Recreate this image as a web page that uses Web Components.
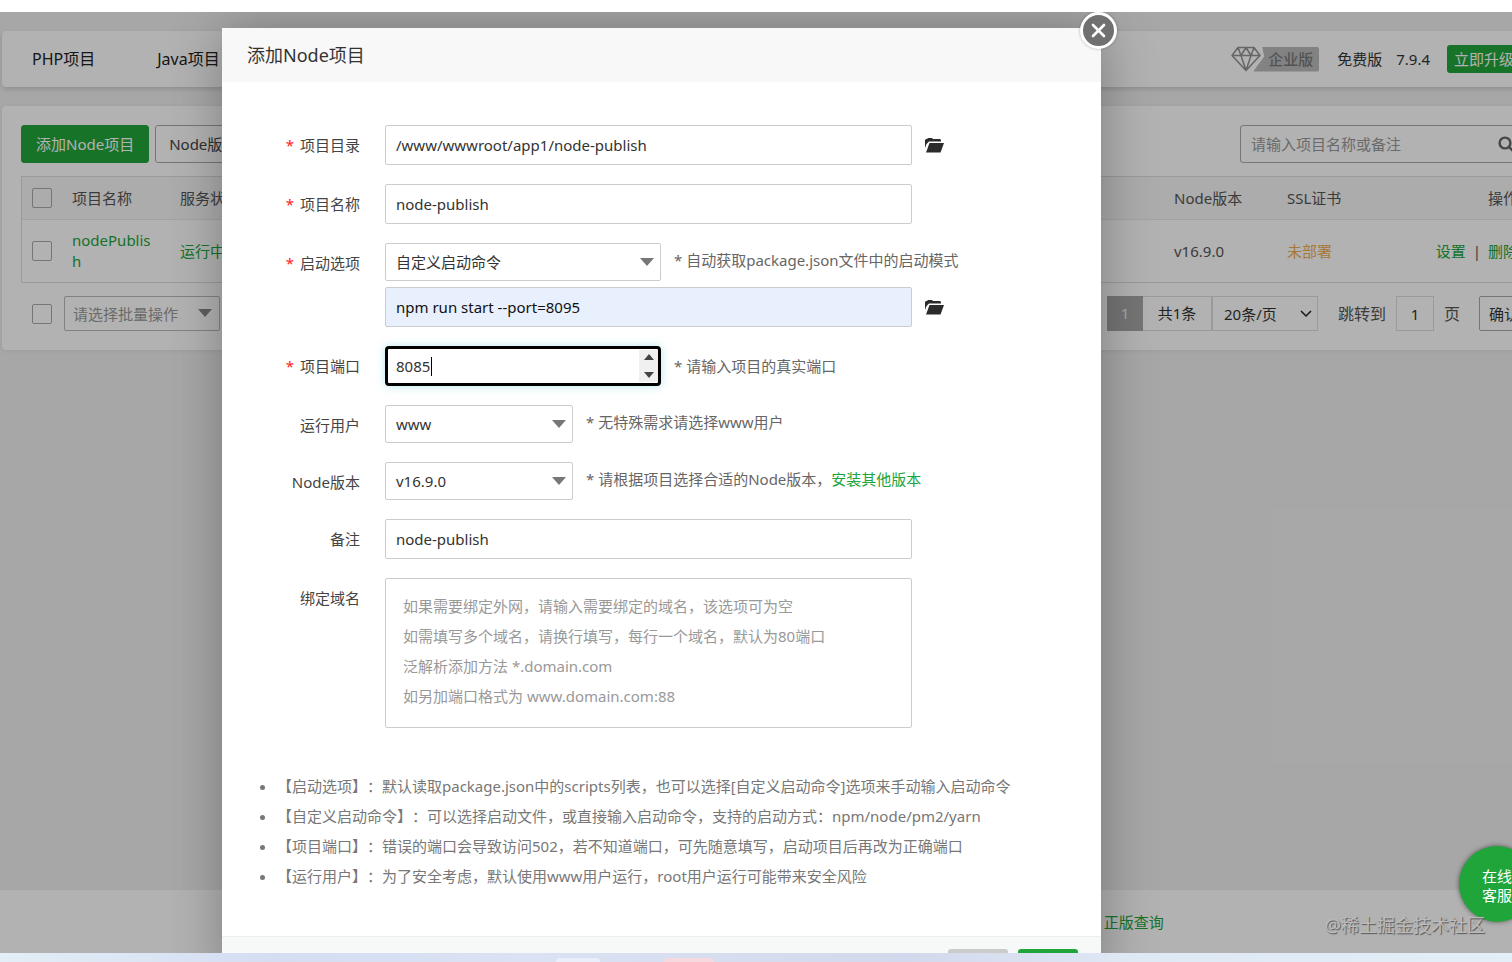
<!DOCTYPE html>
<html lang="zh-CN">
<head>
<meta charset="utf-8">
<title>Node项目</title>
<style>
  html, body {
    height: 100%;
    margin: 0;
  }

  body {
    display: flex;
    flex-direction: column;
    overflow: hidden;
    background: #fff;
    color: #333;
    font: 15px/20px "Noto Sans", "Noto Sans CJK SC", sans-serif;
    text-spacing-trim: space-all;
  }
</style>
</head>
<body>
<bt-window>
  <bt-nav></bt-nav>
  <bt-panel>
    <bt-toolbar></bt-toolbar>
    <bt-project-table></bt-project-table>
    <bt-pager></bt-pager>
  </bt-panel>
  <bt-footer slot="footer"></bt-footer>

  <bt-dialog slot="layer" heading="添加Node项目">
    <bt-row label="项目目录" required value="/www/wwwroot/app1/node-publish" folder></bt-row>
    <bt-row label="项目名称" required value="node-publish"></bt-row>
    <bt-row label="启动选项" required type="select" size="medium" value="自定义启动命令" hint="* 自动获取package.json文件中的启动模式"></bt-row>
    <bt-row name="启动命令" class="joined" value="npm run start --port=8095" autofilled folder></bt-row>
    <bt-row label="项目端口" required type="number" size="medium" value="8085" hint="* 请输入项目的真实端口"></bt-row>
    <bt-row label="运行用户" type="select" size="small" value="www" hint="* 无特殊需求请选择www用户"></bt-row>
    <bt-row label="Node版本" type="select" size="small" value="v16.9.0" hint="* 请根据项目选择合适的Node版本，"><a slot="link" href="#">安装其他版本</a></bt-row>
    <bt-row label="备注" value="node-publish"></bt-row>
    <bt-row label="绑定域名" type="textarea" placeholder="如果需要绑定外网，请输入需要绑定的域名，该选项可为空&#10;如需填写多个域名，请换行填写，每行一个域名，默认为80端口&#10;泛解析添加方法 *.domain.com&#10;如另加端口格式为 www.domain.com:88"></bt-row>
    <bt-help slot="help"></bt-help>
  </bt-dialog>
  <bt-service slot="layer"></bt-service>
  <bt-watermark slot="layer">@稀土掘金技术社区</bt-watermark>
</bt-window>
<bt-taskbar></bt-taskbar>

<script>
class BtElement extends HTMLElement {
  constructor() {
    super();
    this.attachShadow({ mode: 'open' });
  }

  connectedCallback() {
    this.shadowRoot.innerHTML = this.render();
  }
}

class BtWindow extends BtElement {
  render() {
    return `
      <style>
        :host {
          display: flex;
          flex-direction: column;
          flex: 1;
          position: relative;
          overflow: hidden;
          margin-top: 12px;
          background: #f0f0f0;
        }

        .page {
          flex: 1;
          display: flex;
          flex-direction: column;
          gap: 19px;
          padding: 19px 0 0 2px;
          margin-right: -36px;
        }

        .shade {
          position: absolute;
          inset: 0;
          background: rgba(0, 0, 0, .3);
        }
      </style>
      <div class="page"><slot></slot></div>
      <slot name="footer"></slot>
      <div class="shade"></div>
      <slot name="layer"></slot>
    `;
  }
}

class BtNav extends BtElement {
  render() {
    return `
      <style>
        :host {
          display: flex;
          align-items: center;
          height: 56px;
          padding: 0 20px 0 30px;
          background: #fff;
          border-radius: 4px;
          box-shadow: 0 2px 5px rgba(0, 0, 0, .15);
        }

        nav {
          display: flex;
          flex: 1;
          gap: 62px;
          font-size: 16px;
        }

        a {
          color: #222;
          text-decoration: none;
        }

        .pro {
          display: flex;
          align-items: center;
        }

        .pro svg {
          z-index: 1;
        }

        .pro span {
          margin-left: -8px;
          padding: 0 6px 0 15px;
          line-height: 25px;
          background: #bbb;
          color: #777;
          font-weight: 500;
          clip-path: polygon(9px 0, 100% 0, 100% 100%, 0 100%, 11px 40%);
          border-radius: 2px;
        }

        .free {
          margin: 0 14px 0 18px;
        }

        button {
          width: 81px;
          height: 28px;
          margin-left: 17px;
          padding: 0 7px;
          border: 0;
          border-radius: 3px;
          background: #20a53a;
          color: #fff;
          font: inherit;
          text-align: left;
          white-space: nowrap;
        }
      </style>
      <nav><a href="#">PHP项目</a><a href="#">Java项目</a></nav>
      <div class="pro">
        <svg width="30" height="26" viewBox="0 0 30 26" fill="none" stroke="#666" stroke-width="1.5" stroke-linejoin="round">
          <path d="M7 1.5h16l6 8-14 15-14-15zM1 9.500h28M7 1.500l3 8 5 15 5-15 3-8M10 9.500l5-8 5 8"/>
        </svg>
        <span>企业版</span>
      </div>
      <span class="free">免费版</span>
      <span>7.9.4</span>
      <button>立即升级</button>
    `;
  }
}

class BtPanel extends BtElement {
  render() {
    return `
      <style>
        :host {
          display: flex;
          flex-direction: column;
          gap: 13px;
          padding: 19px;
          background: #fff;
          border-radius: 4px;
          box-shadow: 0 1px 5px rgba(0, 0, 0, .08);
        }
      </style>
      <slot></slot>
    `;
  }
}

class BtToolbar extends BtElement {
  render() {
    return `
      <style>
        :host {
          display: flex;
          gap: 6px;
        }

        button {
          height: 38px;
          padding: 0 13px;
          border: 1px solid #aaa;
          border-radius: 3px;
          background: #fff;
          color: #444;
          font: inherit;
        }

        .primary {
          padding: 0 14px;
          border-color: #20a53a;
          background: #20a53a;
          color: #fff;
        }

        .search {
          display: flex;
          align-items: center;
          box-sizing: border-box;
          width: 289px;
          height: 38px;
          margin-left: auto;
          padding: 0 13px 0 10px;
          border: 1px solid #aaa;
          border-radius: 3px;
        }

        input {
          flex: 1;
          min-width: 0;
          padding: 0;
          border: 0;
          background: none;
          font: inherit;
        }

        input::placeholder {
          color: #999;
        }
      </style>
      <button class="primary">添加Node项目</button>
      <button>Node版本管理</button>
      <div class="search">
        <input type="search" aria-label="搜索" placeholder="请输入项目名称或备注">
        <svg width="17" height="17" viewBox="0 0 17 17" fill="none" stroke="#666" stroke-width="2.4">
          <circle cx="7" cy="7" r="5.4"/><path d="M11 11l5 5"/>
        </svg>
      </div>
    `;
  }
}

const checkboxStyle = `
  input[type=checkbox] {
    display: block;
    appearance: none;
    box-sizing: border-box;
    width: 20px;
    height: 20px;
    margin: 0;
    border: 1px solid #aaa;
    border-radius: 2px;
  }
`;

class BtProjectTable extends BtElement {
  render() {
    return `
      <style>
        :host {
          display: block;
        }

        table {
          width: 100%;
          table-layout: fixed;
          border-collapse: separate;
          border-spacing: 0;
          border: 1px solid #ddd;
        }

        th, td {
          box-sizing: border-box;
          padding: 0 10px;
          font-weight: normal;
          text-align: left;
          color: #555;
        }

        th {
          height: 43px;
          background: #f6f6f6;
          border-bottom: 1px solid #e8e8e8;
        }

        td {
          height: 62px;
          line-height: 21px;
        }

        th:nth-child(1) { width: 40px; }
        th:nth-child(2) { width: 108px; }
        th:nth-child(4) { width: 113px; }
        th:nth-child(5) { width: 113px; }
        th:nth-child(6) { width: 138px; }
        th:last-child, td:last-child { text-align: right; }

        .name {
          padding-right: 16px;
          word-break: break-all;
        }

        a {
          color: #20a53a;
          text-decoration: none;
        }

        .warn {
          color: #f0ad4e;
        }

        i {
          padding: 0 7px;
          font-style: normal;
        }

        ${checkboxStyle}
      </style>
      <table>
        <thead>
          <tr>
            <th><input type="checkbox" aria-label="全选"></th>
            <th>项目名称</th>
            <th>服务状态</th>
            <th>Node版本</th>
            <th>SSL证书</th>
            <th>操作</th>
          </tr>
        </thead>
        <tbody>
          <tr>
            <td><input type="checkbox" aria-label="nodePublish"></td>
            <td class="name"><a href="#">nodePublish</a></td>
            <td><a href="#">运行中</a></td>
            <td>v16.9.0</td>
            <td><a class="warn" href="#">未部署</a></td>
            <td><a href="#">设置</a><i>|</i><a href="#">删除</a></td>
          </tr>
        </tbody>
      </table>
    `;
  }
}

class BtPager extends BtElement {
  render() {
    return `
      <style>
        :host {
          display: flex;
          align-items: center;
          height: 35px;
          padding-left: 11px;
        }

        .batch {
          position: relative;
          width: 156px;
          margin: 0 auto 0 12px;
        }

        .batch::after {
          content: "";
          position: absolute;
          right: 8px;
          top: 13px;
          border: 7px solid transparent;
          border-top: 8px solid #888;
          border-bottom: 0;
        }

        select, input, button {
          box-sizing: border-box;
          height: 35px;
          border: 1px solid #ddd;
          background: #fff;
          color: #333;
          font: inherit;
        }

        select {
          display: block;
          appearance: none;
        }

        .batch select {
          width: 100%;
          padding: 0 8px;
          border-color: #bbb;
          border-radius: 2px;
          color: #999;
        }

        .current {
          width: 36px;
          line-height: 35px;
          background: #a8a8a8;
          color: #eee;
          text-align: center;
        }

        .total {
          box-sizing: border-box;
          width: 69px;
          line-height: 33px;
          border: 1px solid #ddd;
          border-left: 0;
          text-align: center;
        }

        .size {
          position: relative;
          margin-right: 20px;
        }

        .size select {
          width: 106px;
          padding: 0 11px;
        }

        .size svg {
          position: absolute;
          right: 6px;
          top: 14px;
        }

        .go {
          display: flex;
          align-items: center;
          gap: 10px;
          color: #555;
          font-size: 16px;
        }

        .go input {
          width: 38px;
          padding: 0;
          font-size: 15px;
          text-align: center;
        }

        button {
          width: 50px;
          margin-left: 19px;
          padding: 0 8px;
          border-color: #aaa;
          border-radius: 2px;
        }

        ${checkboxStyle}
      </style>
      <input type="checkbox" aria-label="全选">
      <div class="batch"><select aria-label="批量操作"><option>请选择批量操作</option></select></div>
      <span class="current">1</span>
      <span class="total">共1条</span>
      <div class="size">
        <select aria-label="每页条数"><option>20条/页</option></select>
        <svg width="12" height="8" viewBox="0 0 12 8" fill="none" stroke="#222" stroke-width="1.5"><path d="M1 1l5 5 5-5"/></svg>
      </div>
      <div class="go"><label for="page">跳转到</label><input id="page" value="1"><span>页</span></div>
      <button>确认</button>
    `;
  }
}

class BtFooter extends BtElement {
  render() {
    return `
      <style>
        :host {
          display: flex;
          align-items: center;
          height: 63px;
          padding-left: 73%;
          background: #fff;
        }

        a {
          color: #20a53a;
          text-decoration: none;
        }
      </style>
      <a href="#">正版查询</a>
    `;
  }
}

class BtDialog extends BtElement {
  render() {
    return `
      <style>
        :host {
          position: absolute;
          left: 222px;
          top: 16px;
          width: 879px;
          background: #fff;
          box-shadow: 1px 1px 50px rgba(0, 0, 0, .3);
        }

        h1 {
          margin: 0;
          padding: 0 25px;
          background: #f8f8f8;
          font-size: 18px;
          font-weight: normal;
          line-height: 54px;
        }

        form {
          display: flex;
          flex-direction: column;
          gap: 19px;
          padding-top: 43px;
        }

        ::slotted(.joined) {
          margin-top: -13px;
        }

        footer {
          display: flex;
          justify-content: flex-end;
          gap: 10px;
          height: 50px;
          padding: 12px 23px 0 0;
          background: #f6f9f8;
          border-top: 1px solid #eee;
          box-sizing: border-box;
        }

        footer button {
          width: 60px;
          height: 36px;
          border: 0;
          border-radius: 3px;
          background: #cbcbcb;
          color: #fff;
          font: inherit;
        }

        footer .ok {
          background: #20a53a;
        }

        .close {
          position: absolute;
          right: -16px;
          top: -16px;
          width: 37px;
          height: 37px;
          padding: 0;
          border: 3px solid #fff;
          border-radius: 50%;
          background: #707070;
          box-shadow: 0 0 3px rgba(0, 0, 0, .3);
        }

        .close svg {
          display: block;
          margin: auto;
        }
      </style>
      <h1>${this.getAttribute('heading')}</h1>
      <form><slot></slot></form>
      <slot name="help"></slot>
      <footer>
        <button aria-label="关闭"></button>
        <button class="ok" aria-label="确定"></button>
      </footer>
      <button class="close" aria-label="关闭窗口">
        <svg width="15" height="15" viewBox="0 0 15 15" stroke="#fff" stroke-width="2.6" stroke-linecap="round"><path d="M2 2l11 11M13 2L2 13"/></svg>
      </button>
    `;
  }
}

class BtRow extends BtElement {
  control() {
    const value = this.getAttribute('value') || '';
    const name = this.getAttribute('name');
    const aria = name ? `aria-label="${name}"` : '';

    switch (this.getAttribute('type')) {
      case 'select':
        return `<div class="box select"><select id="control"><option>${value}</option></select></div>`;
      case 'number':
        return `
          <div class="box number">
            <input id="control" type="number" value="${value}">
            <span class="caret"></span>
            <span class="spin">
              <svg width="10" height="6" viewBox="0 0 10 6"><path d="M0 6l5-6 5 6z" fill="#444"/></svg>
              <svg width="10" height="6" viewBox="0 0 10 6"><path d="M0 0h10l-5 6z" fill="#444"/></svg>
            </span>
          </div>`;
      case 'textarea':
        return `<div class="box"><textarea id="control" placeholder="${this.getAttribute('placeholder')}"></textarea></div>`;
      default:
        return `<div class="box"><input id="control" type="text" value="${value}" ${aria}></div>`;
    }
  }

  render() {
    const label = this.getAttribute('label');
    const hint = this.getAttribute('hint');

    return `
      <style>
        :host {
          display: flex;
          align-items: flex-start;
        }

        /* selects are 38px high, the label must not stretch their row */
        label, .blank {
          width: 138px;
          margin: 0 25px -2px 0;
          line-height: 40px;
          text-align: right;
          color: #444;
        }

        em {
          margin-right: 6px;
          color: #f22;
          font-style: normal;
        }

        .box {
          position: relative;
          width: 527px;
        }

        :host([size=medium]) .box { width: 276px; }
        :host([size=small]) .box { width: 188px; }

        input, select, textarea {
          display: block;
          box-sizing: border-box;
          width: 100%;
          height: 40px;
          margin: 0;
          padding: 0 10px;
          border: 1px solid #ccc;
          border-radius: 2px;
          background: #fff;
          color: #333;
          font: inherit;
          outline: 0;
        }

        select {
          height: 38px;
          appearance: none;
        }

        .select::after {
          content: "";
          position: absolute;
          right: 7px;
          top: 15px;
          border: 7px solid transparent;
          border-top: 8px solid #777;
          border-bottom: 0;
        }

        textarea {
          height: 150px;
          padding: 12px 17px;
          line-height: 30px;
          resize: none;
        }

        textarea::placeholder {
          color: #999;
        }

        :host([autofilled]) input {
          background: #e8f0fe;
          color: #111;
        }

        .number input {
          padding: 0 8px;
          border: 3px solid #000;
          border-radius: 4px;
          box-shadow: 0 0 8px rgba(102, 205, 225, .5);
          appearance: textfield;
        }

        .number input::-webkit-inner-spin-button {
          display: none;
        }

        .caret {
          position: absolute;
          left: 46px;
          top: 11px;
          width: 1px;
          height: 19px;
          background: #000;
        }

        .spin {
          position: absolute;
          right: 3px;
          top: 4px;
          bottom: 4px;
          display: flex;
          flex-direction: column;
          justify-content: space-between;
          align-items: center;
          box-sizing: border-box;
          width: 19px;
          padding: 4px 0;
          background: #f0f0f0;
        }

        .hint {
          margin-left: 13px;
          line-height: 34px;
          color: #666;
        }

        :host([type=number]) .hint {
          line-height: 40px;
        }

        ::slotted(a) {
          color: #20a53a;
          text-decoration: none;
        }

        .folder {
          margin: 13px 0 0 13px;
          padding: 0;
          border: 0;
          background: none;
        }

        .folder svg {
          display: block;
        }
      </style>
      ${label ? `<label for="control">${this.hasAttribute('required') ? '<em>*</em>' : ''}${label}</label>` : '<span class="blank"></span>'}
      ${this.control()}
      ${hint ? `<span class="hint">${hint}<slot name="link"></slot></span>` : ''}
      ${this.hasAttribute('folder') ? `
        <button class="folder" type="button" aria-label="选择目录">
          <svg width="19" height="15" viewBox="0 0 19 15" fill="#2b2b2b">
            <path d="M0 10V2l1-1h1l1-1h4l1 1h7l1 1v1.500H4L1.500 6z"/>
            <path d="M4.500 5H19l-3.500 9.500H1z"/>
          </svg>
        </button>` : ''}
    `;
  }
}

class BtHelp extends BtElement {
  render() {
    return `
      <style>
        :host {
          display: block;
        }

        ul {
          margin: 0;
          padding: 43px 20px 45px 55px;
          line-height: 30px;
          color: #777;
        }
      </style>
      <ul>
        <li>【启动选项】：默认读取package.json中的scripts列表，也可以选择[自定义启动命令]选项来手动输入启动命令</li>
        <li>【自定义启动命令】：可以选择启动文件，或直接输入启动命令，支持的启动方式：npm/node/pm2/yarn</li>
        <li>【项目端口】：错误的端口会导致访问502，若不知道端口，可先随意填写，启动项目后再改为正确端口</li>
        <li>【运行用户】：为了安全考虑，默认使用www用户运行，root用户运行可能带来安全风险</li>
      </ul>
    `;
  }
}

class BtService extends BtElement {
  render() {
    return `
      <style>
        :host {
          position: absolute;
          right: -23px;
          bottom: 31px;
        }

        button {
          display: block;
          width: 76px;
          height: 76px;
          padding: 4px 22px 0;
          border: 0;
          border-radius: 50%;
          background: #20a53a;
          box-shadow: 0 0 5px rgba(0, 0, 0, .5);
          color: #fff;
          font: inherit;
          line-height: 19px;
        }
      </style>
      <button>在线<br>客服</button>
    `;
  }
}

class BtWatermark extends BtElement {
  render() {
    return `
      <style>
        :host {
          position: absolute;
          right: 27px;
          bottom: 16px;
          color: #bbb;
          font-size: 18px;
          line-height: 24px;
          text-shadow: 1px 1px 1px #555;
        }
      </style>
      <slot></slot>
    `;
  }
}

class BtTaskbar extends BtElement {
  render() {
    return `
      <style>
        :host {
          display: flex;
          align-items: flex-end;
          justify-content: center;
          gap: 64px;
          height: 9px;
          padding-right: 242px;
          background: linear-gradient(90deg, #e3eef7, #d5ddf2 18%, #dae2f3 35%, #d3d9ec 60%, #dfe8f5 75%, #e3eef8);
        }

        span {
          width: 44px;
          height: 4px;
          border-radius: 4px 4px 0 0;
          background: #eaeefa;
        }

        span + span {
          width: 50px;
          background: #f6d8df;
        }
      </style>
      <span></span><span></span>
    `;
  }
}

customElements.define('bt-window', BtWindow);
customElements.define('bt-nav', BtNav);
customElements.define('bt-panel', BtPanel);
customElements.define('bt-toolbar', BtToolbar);
customElements.define('bt-project-table', BtProjectTable);
customElements.define('bt-pager', BtPager);
customElements.define('bt-footer', BtFooter);
customElements.define('bt-dialog', BtDialog);
customElements.define('bt-row', BtRow);
customElements.define('bt-help', BtHelp);
customElements.define('bt-service', BtService);
customElements.define('bt-watermark', BtWatermark);
customElements.define('bt-taskbar', BtTaskbar);
</script>
</body>
</html>
